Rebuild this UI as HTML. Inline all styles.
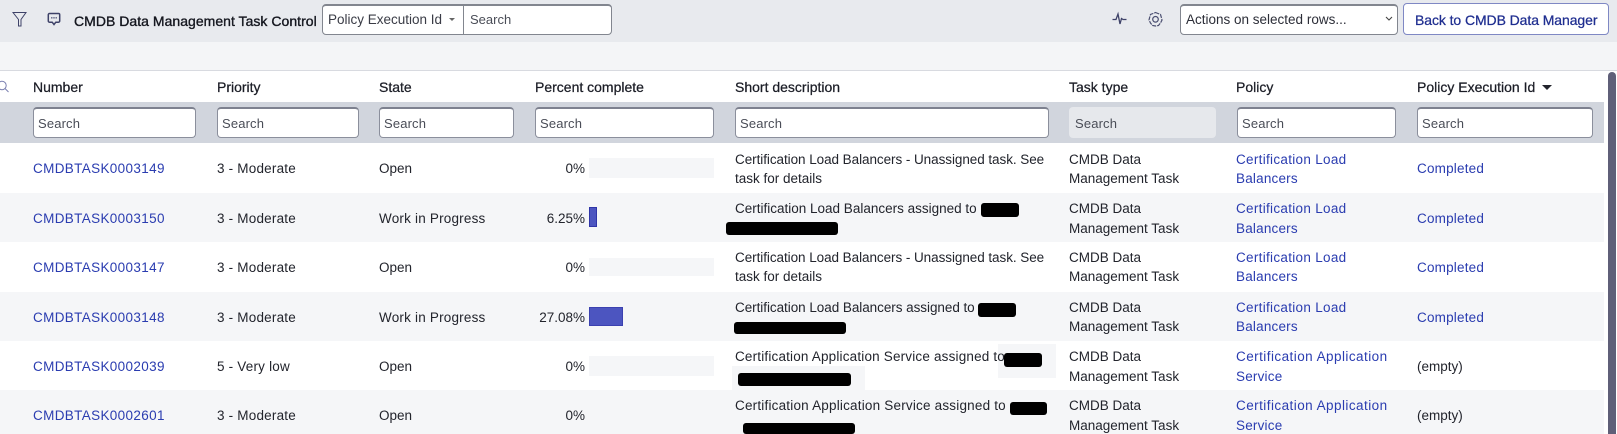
<!DOCTYPE html>
<html><head><meta charset="utf-8"><style>
html,body{margin:0;padding:0;background:#fff}
#p{position:relative;width:1617px;height:434px;overflow:hidden;background:#fff;font-family:"Liberation Sans",sans-serif;font-size:13.5px;color:#22242c;filter:blur(.3px)}
#p div{position:absolute;box-sizing:border-box}
.t{white-space:nowrap;line-height:20px;height:20px;margin-top:1px}
.h{color:#1b1d26;font-size:14px;-webkit-text-stroke:.25px #1b1d26;margin-top:-1px}
.i{background:#fff;border:1px solid #8b8f9c;border-top:2px solid #7d818f;border-radius:4px;height:31px;top:107px;padding:7px 0 0 4px;color:#4a4d57;font-size:13px;letter-spacing:.15px}
.l{color:#2a3cb0;letter-spacing:.2px}
.n{letter-spacing:.35px}
.w{letter-spacing:.2px}
.b{background:#000;border-radius:3px}
.r{left:0;width:1604px}
</style></head><body><div id="p">
<div style="left:0;top:0;width:1617px;height:42px;background:#e8eaee"></div>
<div style="left:0;top:42px;width:1617px;height:28px;background:#f4f5f7"></div>
<div style="left:0;top:70px;width:1617px;height:1px;background:#d8dae0"></div>
<svg style="position:absolute;left:12px;top:11px" width="15" height="16" viewBox="0 0 15 16" fill="none" stroke="#3e4268" stroke-width="1"><path d="M1 1.5H14L9 8.5V15H6.5V8.5Z"/></svg>
<svg style="position:absolute;left:47px;top:12px" width="14" height="15" viewBox="0 0 14 15" fill="none"><path d="M2.5 1.5H11.5A1.2 1.2 0 0 1 12.7 2.7V9A1.2 1.2 0 0 1 11.5 10.2H8.8L7 12.5 5.2 10.2H2.5A1.2 1.2 0 0 1 1.3 9V2.7A1.2 1.2 0 0 1 2.5 1.5Z" stroke="#3e4268" stroke-width="1.5"/><path d="M4.2 5.8H5.4M6.4 5.8H7.6M8.6 5.8H9.8" stroke="#3e4268" stroke-width="1.3"/></svg>
<div class="t" style="left:74px;top:10px;font-size:14px;letter-spacing:.03px;color:#14161e;-webkit-text-stroke:.35px #14161e">CMDB Data Management Task Control</div>
<div style="left:322px;top:4px;width:290px;height:31px;background:#fff;border:1px solid #82868f;border-top:2px solid #82868f;border-radius:4px"></div>
<div style="left:463px;top:4px;width:1px;height:31px;background:#82868f"></div>
<div class="t" style="left:328px;top:9px;color:#3a3c46;font-size:13.5px">Policy Execution Id</div>
<div style="left:449px;top:18px;width:0;height:0;border-left:3px solid transparent;border-right:3px solid transparent;border-top:3px solid #666"></div>
<div class="t" style="left:470px;top:9px;color:#4a4d57;font-size:13px">Search</div>
<svg style="position:absolute;left:1112px;top:11px" width="15" height="16" viewBox="0 0 15 16" fill="none" stroke="#3e4268" stroke-width="1.3"><path d="M0.5 8.5H4L6 3 8 13 9.5 7.5 11 8.5H14.5"/></svg>
<svg style="position:absolute;left:1147px;top:11px" width="17" height="17" viewBox="0 0 17 17" fill="none" stroke="#4a4e70" stroke-width="1.2"><path d="M8.5 1.5L11 2.5 13.5 3.5 14.5 7 15 9 13.5 12 11.5 14.5 8.5 15 5.5 14.5 3.5 12 2 9 2.5 7 3.5 3.5 6 2.5Z" stroke-dasharray="4 1"/><circle cx="8.5" cy="8.3" r="2.8"/></svg>
<div style="left:1180px;top:4px;width:218px;height:31px;background:#fff;border:1px solid #82868f;border-top:2px solid #82868f;border-radius:4px"></div>
<div class="t" style="left:1186px;top:9px;color:#2c2e38;font-size:13.5px">Actions on selected rows...</div>
<svg style="position:absolute;left:1385px;top:16px" width="8" height="6" viewBox="0 0 8 6" fill="none" stroke="#444" stroke-width="1.1"><path d="M1 1L4 4 7 1"/></svg>
<div style="left:1403px;top:3px;width:206px;height:32px;background:#fff;border:1px solid #7f88c4;border-radius:4px"></div>
<div class="t" style="left:1415px;top:9px;color:#1f2e90;font-size:14px;letter-spacing:-.08px;-webkit-text-stroke:.25px #1f2e90">Back to CMDB Data Manager</div>

<svg style="position:absolute;left:-3px;top:80px" width="13" height="13" viewBox="0 0 13 13" fill="none" stroke="#7a7fb0" stroke-width="1"><circle cx="5" cy="5.5" r="4.2"/><path d="M8 8.5L11.5 12"/></svg>
<div class="t h" style="left:33px;top:78px">Number</div>
<div class="t h" style="left:217px;top:78px">Priority</div>
<div class="t h" style="left:379px;top:78px">State</div>
<div class="t h" style="left:535px;top:78px">Percent complete</div>
<div class="t h" style="left:735px;top:78px">Short description</div>
<div class="t h" style="left:1069px;top:78px">Task type</div>
<div class="t h" style="left:1236px;top:78px">Policy</div>
<div class="t h" style="left:1417px;top:78px">Policy Execution Id</div>
<div style="left:1542px;top:85px;width:0;height:0;border-left:5px solid transparent;border-right:5px solid transparent;border-top:5px solid #22242c"></div>

<div class="r" style="top:102px;height:41px;background:#d1d5dd"></div>
<div class="i" style="left:33px;width:163px">Search</div>
<div class="i" style="left:217px;width:142px">Search</div>
<div class="i" style="left:379px;width:135px">Search</div>
<div class="i" style="left:535px;width:179px">Search</div>
<div class="i" style="left:735px;width:314px">Search</div>
<div class="i" style="left:1069px;width:147px;background:#e6e8ec;border:0;padding:9px 0 0 6px">Search</div>
<div class="i" style="left:1237px;width:159px">Search</div>
<div class="i" style="left:1417px;width:176px">Search</div>
<div style="left:1608px;top:72px;width:8px;height:362px;background:#5f5f78;border-radius:4px 4px 0 0"></div>

<div class="r" style="top:193px;height:49px;background:#f5f6f8"></div>
<div class="r" style="top:292px;height:49px;background:#f5f6f8"></div>
<div class="r" style="top:390px;height:44px;background:#f5f6f8"></div>

<div class="t l n" style="left:33px;top:158px">CMDBTASK0003149</div>
<div class="t l n" style="left:33px;top:208px">CMDBTASK0003150</div>
<div class="t l n" style="left:33px;top:257px">CMDBTASK0003147</div>
<div class="t l n" style="left:33px;top:307px">CMDBTASK0003148</div>
<div class="t l n" style="left:33px;top:356px">CMDBTASK0002039</div>
<div class="t l n" style="left:33px;top:405px">CMDBTASK0002601</div>

<div class="t w" style="left:217px;top:158px">3 - Moderate</div>
<div class="t w" style="left:217px;top:208px">3 - Moderate</div>
<div class="t w" style="left:217px;top:257px">3 - Moderate</div>
<div class="t w" style="left:217px;top:307px">3 - Moderate</div>
<div class="t w" style="left:217px;top:356px">5 - Very low</div>
<div class="t w" style="left:217px;top:405px">3 - Moderate</div>

<div class="t" style="left:379px;top:158px">Open</div>
<div class="t w" style="left:379px;top:208px">Work in Progress</div>
<div class="t" style="left:379px;top:257px">Open</div>
<div class="t w" style="left:379px;top:307px">Work in Progress</div>
<div class="t" style="left:379px;top:356px">Open</div>
<div class="t" style="left:379px;top:405px">Open</div>

<div class="t" style="left:500px;width:85px;text-align:right;top:158px">0%</div>
<div class="t" style="left:500px;width:85px;text-align:right;top:208px">6.25%</div>
<div class="t" style="left:500px;width:85px;text-align:right;top:257px">0%</div>
<div class="t" style="left:500px;width:85px;text-align:right;top:307px">27.08%</div>
<div class="t" style="left:500px;width:85px;text-align:right;top:356px">0%</div>
<div class="t" style="left:500px;width:85px;text-align:right;top:405px">0%</div>

<div style="left:589px;top:158px;width:125px;height:20px;background:#f5f6f8"></div>
<div style="left:589px;top:207px;width:8px;height:20px;background:#4c55c0;border:1px solid #2f35a8"></div>
<div style="left:589px;top:258px;width:125px;height:18px;background:#f5f6f8"></div>
<div style="left:589px;top:307px;width:34px;height:19px;background:#4c55c0;border:1px solid #3b41b0"></div>
<div style="left:589px;top:356px;width:125px;height:20px;background:#f5f6f8"></div>

<div style="left:998px;top:344px;width:58px;height:34px;background:#f5f6f8"></div>
<div style="left:732px;top:366px;width:133px;height:24px;background:#f5f6f8"></div>

<div class="t" style="left:735px;top:149px;letter-spacing:-.06px">Certification Load Balancers - Unassigned task. See</div>
<div class="t" style="left:735px;top:168px">task for details</div>
<div class="t" style="left:735px;top:198px">Certification Load Balancers assigned to</div>
<div class="t" style="left:735px;top:247px;letter-spacing:-.06px">Certification Load Balancers - Unassigned task. See</div>
<div class="t" style="left:735px;top:266px">task for details</div>
<div class="t" style="left:735px;top:297px;letter-spacing:-.05px">Certification Load Balancers assigned to</div>
<div class="t" style="left:735px;top:346px;letter-spacing:.18px">Certification Application Service assigned to</div>
<div class="t" style="left:735px;top:395px;letter-spacing:.2px">Certification Application Service assigned to</div>

<div class="b" style="left:981px;top:203px;width:38px;height:14px"></div>
<div class="b" style="left:726px;top:222px;width:112px;height:13px"></div>
<div class="b" style="left:978px;top:303px;width:38px;height:14px"></div>
<div class="b" style="left:734px;top:322px;width:112px;height:12px"></div>
<div class="b" style="left:1004px;top:353px;width:38px;height:14px"></div>
<div class="b" style="left:738px;top:373px;width:113px;height:13px"></div>
<div class="b" style="left:1010px;top:402px;width:37px;height:13px"></div>
<div class="b" style="left:743px;top:423px;width:112px;height:11px"></div>

<div class="t" style="left:1069px;top:149px">CMDB Data</div><div class="t" style="left:1069px;top:168px">Management Task</div>
<div class="t" style="left:1069px;top:198px">CMDB Data</div><div class="t" style="left:1069px;top:218px">Management Task</div>
<div class="t" style="left:1069px;top:247px">CMDB Data</div><div class="t" style="left:1069px;top:266px">Management Task</div>
<div class="t" style="left:1069px;top:297px">CMDB Data</div><div class="t" style="left:1069px;top:316px">Management Task</div>
<div class="t" style="left:1069px;top:346px">CMDB Data</div><div class="t" style="left:1069px;top:366px">Management Task</div>
<div class="t" style="left:1069px;top:395px">CMDB Data</div><div class="t" style="left:1069px;top:415px">Management Task</div>

<div class="t l" style="left:1236px;top:149px;letter-spacing:.3px">Certification Load</div><div class="t l" style="left:1236px;top:168px">Balancers</div>
<div class="t l" style="left:1236px;top:198px;letter-spacing:.3px">Certification Load</div><div class="t l" style="left:1236px;top:218px">Balancers</div>
<div class="t l" style="left:1236px;top:247px;letter-spacing:.3px">Certification Load</div><div class="t l" style="left:1236px;top:266px">Balancers</div>
<div class="t l" style="left:1236px;top:297px;letter-spacing:.3px">Certification Load</div><div class="t l" style="left:1236px;top:316px">Balancers</div>
<div class="t l" style="left:1236px;top:346px;letter-spacing:.45px">Certification Application</div><div class="t l" style="left:1236px;top:366px">Service</div>
<div class="t l" style="left:1236px;top:395px;letter-spacing:.45px">Certification Application</div><div class="t l" style="left:1236px;top:415px">Service</div>

<div class="t l" style="left:1417px;top:158px">Completed</div>
<div class="t l" style="left:1417px;top:208px">Completed</div>
<div class="t l" style="left:1417px;top:257px">Completed</div>
<div class="t l" style="left:1417px;top:307px">Completed</div>
<div class="t" style="left:1417px;top:356px">(empty)</div>
<div class="t" style="left:1417px;top:405px">(empty)</div>
</div></body></html>
